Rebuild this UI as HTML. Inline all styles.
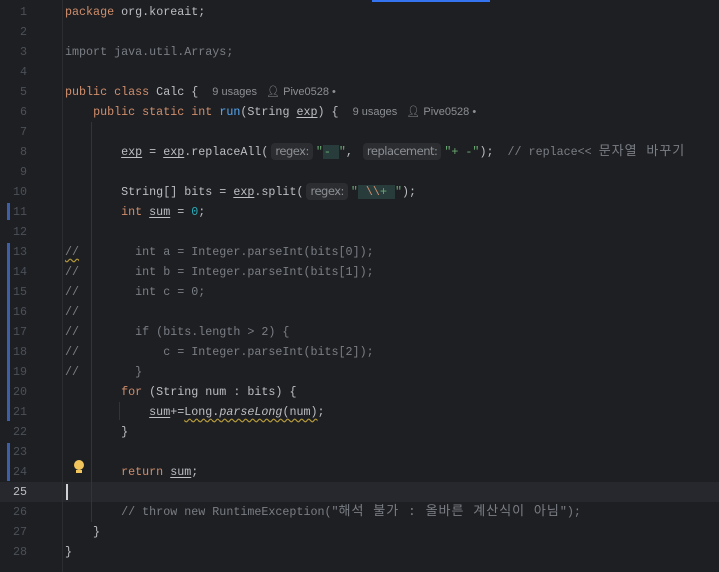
<!DOCTYPE html>
<html><head><meta charset="utf-8"><style>
body{margin:0;width:719px;height:572px;background:#1e1f22;overflow:hidden;position:relative;font-family:"Liberation Mono","Noto Sans CJK KR",monospace;font-size:11.7px;color:#bcbec4}
.ln{position:absolute;left:0;width:27px;text-align:right;color:#4b5059;height:20px;line-height:20px}
.c{position:absolute;left:65px;white-space:pre;height:20px;line-height:20px}
.k{color:#cf8e6d}.s{color:#6aab73}.m{color:#56a8f5}.n{color:#2aacb8}.g{color:#7a7e85}
.u{text-decoration:underline;text-underline-offset:2px}
.h{display:inline-block;background:#2b2d30;color:#8c8f94;border-radius:4px;padding:0 4px;margin:0 3px;line-height:17px;font-size:11.5px;font-family:"DejaVu Sans",sans-serif;letter-spacing:-0.5px}
.hl{background:#293c3c;padding:0 1px}
.w{text-decoration:underline wavy #b59a3a;text-underline-offset:3px}
.meta{color:#8c8f94;font-family:"Liberation Sans",sans-serif;font-size:11px}
.kr{font-size:13px;letter-spacing:1px}
.bar{position:absolute;left:7px;width:3px;background:#3d5fa8}
</style></head><body>
<div style="position:absolute;left:372px;top:0;width:118px;height:2px;background:#3574f0"></div>
<div style="position:absolute;left:0;top:482px;width:719px;height:20px;background:#26282e"></div>
<div style="position:absolute;left:62px;top:0;width:1px;height:572px;background:#2b2d30"></div>
<div style="position:absolute;left:91px;top:122px;width:1px;height:400px;background:#313438"></div>
<div style="position:absolute;left:119px;top:402px;width:1px;height:18px;background:#313438"></div>
<div class="bar" style="top:203px;height:17px"></div>
<div class="bar" style="top:243px;height:178px"></div>
<div class="bar" style="top:443px;height:38px"></div>
<div style="position:absolute;left:66px;top:484px;width:2px;height:16px;background:#ced0d6"></div>
<div style="position:absolute;left:74px;top:460px;width:10px;height:10px;border-radius:50%;background:#f2c55c"></div>
<div style="position:absolute;left:76px;top:470px;width:6px;height:3px;background:#f2c55c"></div>

<div class="ln" style="top:2px">1</div><div class="ln" style="top:22px">2</div><div class="ln" style="top:42px">3</div><div class="ln" style="top:62px">4</div><div class="ln" style="top:82px">5</div><div class="ln" style="top:102px">6</div><div class="ln" style="top:122px">7</div><div class="ln" style="top:142px">8</div><div class="ln" style="top:162px">9</div><div class="ln" style="top:182px">10</div><div class="ln" style="top:202px">11</div><div class="ln" style="top:222px">12</div><div class="ln" style="top:242px">13</div><div class="ln" style="top:262px">14</div><div class="ln" style="top:282px">15</div><div class="ln" style="top:302px">16</div><div class="ln" style="top:322px">17</div><div class="ln" style="top:342px">18</div><div class="ln" style="top:362px">19</div><div class="ln" style="top:382px">20</div><div class="ln" style="top:402px">21</div><div class="ln" style="top:422px">22</div><div class="ln" style="top:442px">23</div><div class="ln" style="top:462px">24</div><div class="ln" style="top:482px;color:#bcbec4">25</div><div class="ln" style="top:502px">26</div><div class="ln" style="top:522px">27</div><div class="ln" style="top:542px">28</div>

<div class="c" style="top:2px"><span class="k">package</span> org.koreait;</div>
<div class="c g" style="top:42px">import java.util.Arrays;</div>
<div class="c" style="top:82px"><span class="k">public class</span> Calc {  <span class="meta">9 usages &nbsp; &#128100;&#xFE0E; Pive0528 •</span></div>
<div class="c" style="top:102px">    <span class="k">public static int</span> <span class="m">run</span>(String <span class="u">exp</span>) {  <span class="meta">9 usages &nbsp; &#128100;&#xFE0E; Pive0528 •</span></div>
<div class="c" style="top:142px">        <span class="u">exp</span> = <span class="u">exp</span>.replaceAll(<span class="h">regex:</span><span class="s">"<span class="hl">- </span>"</span>, <span class="h">replacement:</span><span class="s">"+ -"</span>);  <span class="g">// replace&lt;&lt; <span class="kr">문자열 바꾸기</span></span></div>
<div class="c" style="top:182px">        String[] bits = <span class="u">exp</span>.split(<span class="h">regex:</span><span class="s">"<span class="hl"> <span class="k">\\</span>+ </span>"</span>);</div>
<div class="c" style="top:202px">        <span class="k">int</span> <span class="u">sum</span> = <span class="n">0</span>;</div>
<div class="c g" style="top:242px"><span class="w">//</span>        int a = Integer.parseInt(bits[0]);</div>
<div class="c g" style="top:262px">//        int b = Integer.parseInt(bits[1]);</div>
<div class="c g" style="top:282px">//        int c = 0;</div>
<div class="c g" style="top:302px">//</div>
<div class="c g" style="top:322px">//        if (bits.length &gt; 2) {</div>
<div class="c g" style="top:342px">//            c = Integer.parseInt(bits[2]);</div>
<div class="c g" style="top:362px">//        }</div>
<div class="c" style="top:382px">        <span class="k">for</span> (String num : bits) {</div>
<div class="c" style="top:402px">            <span class="u">sum</span>+=<span class="w">Long.<i>parseLong</i>(num)</span>;</div>
<div class="c" style="top:422px">        }</div>
<div class="c" style="top:462px">        <span class="k">return</span> <span class="u">sum</span>;</div>
<div class="c g" style="top:502px">        // throw new RuntimeException("<span class="kr">해석 불가 : 올바른 계산식이 아님</span>");</div>
<div class="c" style="top:522px">    }</div>
<div class="c" style="top:542px">}</div>
</body></html>
